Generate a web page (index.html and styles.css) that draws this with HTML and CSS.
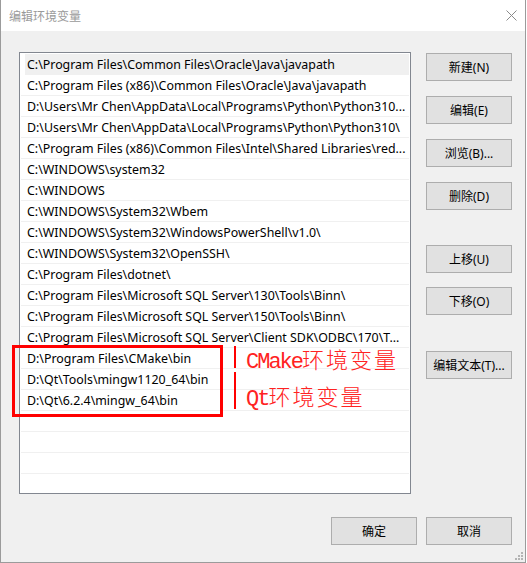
FILE: index.html
```html
<!DOCTYPE html>
<html lang="zh-CN">

<head>
    <meta charset="UTF-8">
    <title>编辑环境变量</title>
    <link rel="stylesheet" href="styles.css">
</head>

<body>
    <div class="window">
        <!-- Title bar -->
        <div class="titlebar">
            <span class="title">编辑环境变量</span>
            <svg class="close" width="11" height="11" viewBox="0 0 11 11">
                <path d="M0.5 0.5 L10.5 10.5 M10.5 0.5 L0.5 10.5" stroke="#8a8a8a" stroke-width="1" fill="none"/>
            </svg>
        </div>

        <div class="content">
            <div class="main">
                <!-- Path list -->
                <ul class="pathlist">
                    <li class="hot">C:\Program Files\Common Files\Oracle\Java\javapath</li>
                    <li>C:\Program Files (x86)\Common Files\Oracle\Java\javapath</li>
                    <li>D:\Users\Mr Chen\AppData\Local\Programs\Python\Python310...</li>
                    <li>D:\Users\Mr Chen\AppData\Local\Programs\Python\Python310\</li>
                    <li>C:\Program Files (x86)\Common Files\Intel\Shared Libraries\red...</li>
                    <li>C:\WINDOWS\system32</li>
                    <li>C:\WINDOWS</li>
                    <li>C:\WINDOWS\System32\Wbem</li>
                    <li>C:\WINDOWS\System32\WindowsPowerShell\v1.0\</li>
                    <li>C:\WINDOWS\System32\OpenSSH\</li>
                    <li>C:\Program Files\dotnet\</li>
                    <li>C:\Program Files\Microsoft SQL Server\130\Tools\Binn\</li>
                    <li>C:\Program Files\Microsoft SQL Server\150\Tools\Binn\</li>
                    <li>C:\Program Files\Microsoft SQL Server\Client SDK\ODBC\170\T...</li>
                    <li>D:\Program Files\CMake\bin</li>
                    <li>D:\Qt\Tools\mingw1120_64\bin</li>
                    <li>D:\Qt\6.2.4\mingw_64\bin</li>
                    <li></li>
                    <li></li>
                    <li></li>
                    <li></li>
                </ul>

                <!-- Side buttons -->
                <div class="side">
                    <button class="btn">新建(N)</button>
                    <button class="btn">编辑(E)</button>
                    <button class="btn">浏览(B)...</button>
                    <button class="btn">删除(D)</button>
                    <button class="btn group">上移(U)</button>
                    <button class="btn">下移(O)</button>
                    <button class="btn group last">编辑文本(T)...</button>
                </div>
            </div>

            <div class="footer">
                <button class="btn">确定</button>
                <button class="btn">取消</button>
            </div>
        </div>

        <!-- Red annotation drawn over the list -->
        <div class="mark-box"></div>
        <div class="mark-line first"></div>
        <div class="mark-line second"></div>
        <div class="mark-text">
            <div><span class="latin">CMake</span>环境变量</div>
            <div class="second"><span class="latin">Qt</span>环境变量</div>
        </div>

        <!-- Resize grip -->
        <svg class="grip" width="8" height="8" viewBox="0 0 8 8">
            <rect x="6" y="0" width="2" height="2" fill="#b4b4b4"/>
            <rect x="3" y="3" width="2" height="2" fill="#b4b4b4"/>
            <rect x="6" y="3" width="2" height="2" fill="#b4b4b4"/>
            <rect x="0" y="6" width="2" height="2" fill="#b4b4b4"/>
            <rect x="3" y="6" width="2" height="2" fill="#b4b4b4"/>
            <rect x="6" y="6" width="2" height="2" fill="#b4b4b4"/>
        </svg>
    </div>
</body>

</html>
```

FILE: styles.css
```css
/* Base styles */
body {
    margin: 0;
    padding: 0;
    background-color: #fff;
    font-family: "Noto Sans", "Noto Sans CJK SC", sans-serif;
    font-size: 12px;
    color: #000;
}

/* Window frame */
.window {
    position: relative;
    width: 526px;
    height: 563px;
    box-sizing: border-box;
    border: 1px solid #9b9b9b;
    border-top: none;
    background-color: #f0f0f0;
}

/* Title bar */
.titlebar {
    height: 31px;
    background-color: #fff;
    display: flex;
    align-items: center;
    justify-content: space-between;
    padding: 0 8px 0 8px;
}

.title {
    color: #9a9a9a;
    font-size: 12px;
}

.close {
    display: block;
    margin-top: -1px;
}

/* Dialog body */
.content {
    padding: 21px 13px 0 18px;
}

.main {
    display: flex;
    gap: 15px;
}

/* List of paths */
.pathlist {
    list-style: none;
    margin: 0;
    width: 392px;
    height: 442px;
    box-sizing: border-box;
    padding: 1px;
    border: 1px solid #828790;
    background-color: #fff;
    overflow: hidden;
}

.pathlist li {
    height: 20px;
    line-height: 22px;
    padding-left: 6px;
    border-bottom: 1px solid #f0f0f0;
    font-size: 12.4px;
    white-space: nowrap;
    overflow: hidden;
}

.pathlist li.hot {
    margin-left: 4px;
    padding-left: 2px;
    background-color: #f0f0f0;
}

/* Buttons */
.btn {
    display: block;
    width: 86px;
    height: 28px;
    padding: 0;
    font-family: inherit;
    font-size: 12px;
    color: #000;
    background-color: #e1e1e1;
    border: 1px solid #adadad;
    border-radius: 0;
}

.side {
    display: flex;
    flex-direction: column;
    gap: 15px;
    padding-top: 1px;
}

.side .btn.group {
    margin-top: 20px;
}

.side .btn.group + .btn {
    margin-top: -1px;
}

.side .btn.group.last {
    margin-top: 21px;
}

.footer {
    display: flex;
    justify-content: flex-end;
    gap: 9px;
    margin-top: 23px;
}

/* Red annotation */
.mark-box {
    position: absolute;
    left: 11px;
    top: 345px;
    width: 211px;
    height: 72px;
    box-sizing: border-box;
    border: 3px solid #f00;
}

.mark-line {
    position: absolute;
    left: 233px;
    width: 2px;
    background-color: #f00;
}

.mark-line.first {
    top: 346px;
    height: 22px;
}

.mark-line.second {
    top: 372px;
    height: 37px;
}

.mark-text {
    position: absolute;
    left: 245px;
    top: 348px;
    color: #f22;
    font-family: "Noto Sans CJK SC", sans-serif;
    font-size: 22px;
    font-weight: 300;
    line-height: 20px;
    letter-spacing: 2px;
}

.mark-text .second {
    margin-top: 12px;
}

.mark-text .latin {
    font-family: "Liberation Mono", monospace;
    font-weight: 400;
    letter-spacing: -2px;
}

/* Resize grip */
.grip {
    position: absolute;
    right: 2px;
    bottom: 2px;
}
```
